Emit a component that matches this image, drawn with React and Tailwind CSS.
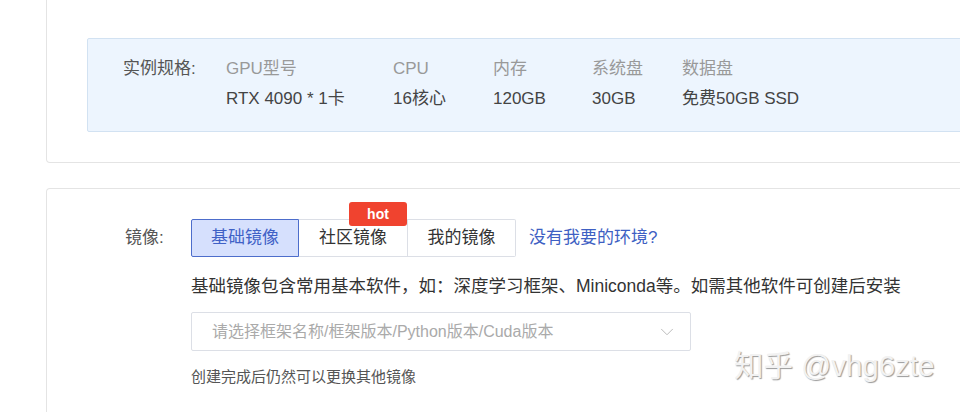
import { ChevronDown } from "lucide-react";

const specs = [
  { label: "GPU型号", value: "RTX 4090 * 1卡", width: "w-[167px]" },
  { label: "CPU", value: "16核心", width: "w-[100px]" },
  { label: "内存", value: "120GB", width: "w-[99px]" },
  { label: "系统盘", value: "30GB", width: "w-[90px]" },
  { label: "数据盘", value: "免费50GB SSD", width: "w-[160px]" },
];

function SpecCard() {
  return (
    <div className="ml-[46px] w-[960px] h-[163px] border border-t-0 border-[#e4e4e4] rounded-b-[4px] pl-[40px] pt-[38px]">
      <div className="h-[94px] border border-[#d2e2f2] bg-[#edf5fe] rounded-[2px] flex pl-[35px] pt-[15px]">
        <div className="w-[103px] text-[17px] leading-[30px] text-[#555]">实例规格:</div>
        {specs.map((s) => (
          <div key={s.label} className={`${s.width} text-[17px] leading-[30px]`}>
            <div className="text-[#999]">{s.label}</div>
            <div className="text-[#444] whitespace-nowrap">{s.value}</div>
          </div>
        ))}
      </div>
    </div>
  );
}

function ImageCard() {
  return (
    <div className="mt-[25px] ml-[46px] w-[960px] h-[240px] border border-b-0 border-[#e4e4e4] rounded-t-[4px] pl-[78px] pt-[30px]">
      <div className="flex items-center">
        <div className="w-[66px] text-[17px] text-[#555]">镜像:</div>
        <div className="flex h-[38px]">
          <button className="w-[108px] border border-[#4d6dcb] bg-[#d6e0fd] text-[#3f61c6] text-[17px] rounded-l-[2px]">
            基础镜像
          </button>
          <button className="relative w-[109px] border border-l-0 border-[#dcdfe6] bg-white text-[#333] text-[17px]">
            社区镜像
            <span className="absolute right-0 -top-[18px] w-[58px] h-[24px] bg-[#f0432f] text-white text-[14px] leading-[24px] font-semibold rounded-[3px]">
              hot
            </span>
          </button>
          <button className="w-[108px] border border-l-0 border-[#dcdfe6] bg-white text-[#333] text-[17px] rounded-r-[2px]">
            我的镜像
          </button>
        </div>
        <a className="ml-[13px] text-[17px] text-[#3e5fc3]">没有我要的环境?</a>
      </div>
      <div className="pl-[66px]">
        <p className="mt-[16px] text-[17.5px] leading-[26px] text-[#333] whitespace-nowrap">
          基础镜像包含常用基本软件，如：深度学习框架、Miniconda等。如需其他软件可创建后安装
        </p>
        <div className="mt-[13px] w-[500px] h-[39px] border border-[#dcdfe6] rounded-[2px] flex items-center justify-between pl-[20px] pr-[12px]">
          <span className="text-[16px] text-[#aaa]">请选择框架名称/框架版本/Python版本/Cuda版本</span>
          <ChevronDown size={22} strokeWidth={1} className="text-[#b5b5b5]" />
        </div>
        <p className="mt-[15px] text-[15px] leading-[22px] text-[#555]">创建完成后仍然可以更换其他镜像</p>
      </div>
    </div>
  );
}

export default function App() {
  return (
    <div
      className="relative w-[960px] h-[412px] overflow-hidden bg-white"
      style={{ fontFamily: '"Liberation Sans", "Noto Sans CJK SC", sans-serif' }}
    >
      <SpecCard />
      <ImageCard />
      <div className="absolute left-[734px] top-[348px] text-[29.5px] leading-[36px] text-[#f2f2f2] [text-shadow:1px_1px_1px_#9a9a9a] whitespace-nowrap">
        知乎 @vhg6zte
      </div>
    </div>
  );
}
